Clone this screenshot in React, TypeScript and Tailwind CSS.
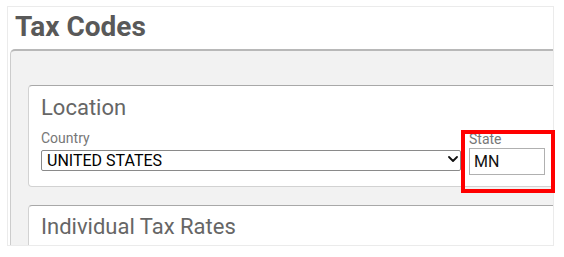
import React from 'react';

const font = { fontFamily: 'Roboto, "Liberation Sans", sans-serif' };

const Chevron = () => (
  <svg
    className="pointer-events-none absolute right-[3px] top-[7px]"
    width="10"
    height="6"
    viewBox="0 0 10 6"
    fill="none"
  >
    <path d="M1 1l4 4 4-4" stroke="#111" strokeWidth="1.8" strokeLinecap="round" strokeLinejoin="round" />
  </svg>
);

export default function App() {
  return (
    <div className="relative w-[564px] h-[257px] bg-white" style={font}>
      <div className="ml-[7px] mt-[6px] w-[547px] h-[240px] border border-[#ebebeb] overflow-hidden">
        <h1 className="pl-[7px] pt-[3px] mb-[5px] text-[28px] leading-[34px] font-bold text-[#595959]">
          Tax Codes
        </h1>

        <div className="ml-[2px] w-[580px] h-[200px] bg-[#f2f2f2] border-l border-t-2 border-[#cccccc] border-t-[#b8b8b8] rounded-tl-[5px] pl-[17px] pt-[34px]">
          <section className="w-[560px] bg-white border border-[#d2d2d2] border-t-[#a8a8a8] rounded-[4px] pl-[12px] pt-[9px] pb-[11px]">
            <h2 className="text-[22px] leading-[26px] text-[#666666]">Location</h2>
            <div className="mt-[7px] flex items-start">
              <div className="mt-[2px] flex flex-col">
                <label className="text-[14px] leading-[16px] text-[#777777]">Country</label>
                <div className="relative mt-[3px] w-[420px] h-[21px]">
                  <select
                    defaultValue="US"
                    className="appearance-none w-full h-full border border-[#8a8a8a] rounded-[2px] bg-white pl-[5px] text-[16px] leading-[19px] text-black outline-none"
                  >
                    <option value="US">UNITED STATES</option>
                  </select>
                  <Chevron />
                </div>
              </div>
              <div className="ml-[8px] mt-[3px] flex flex-col">
                <label className="text-[14px] leading-[16px] text-[#777777]">State</label>
                <input
                  defaultValue="MN"
                  className="mt-[1px] w-[76px] h-[27px] border border-[#b0b0b0] px-[4px] text-[16px] text-[#111111] outline-none"
                />
              </div>
            </div>
          </section>

          <section className="mt-[18px] w-[560px] h-[60px] bg-white border border-[#d2d2d2] border-t-[#a8a8a8] rounded-[4px] pl-[12px] pt-[8px]">
            <h2 className="text-[22px] leading-[26px] text-[#666666]">Individual Tax Rates</h2>
          </section>
        </div>
      </div>

      <div className="absolute left-[461px] top-[124px] w-[94px] h-[63px] border-4 border-[#ff0000]" />
    </div>
  );
}
